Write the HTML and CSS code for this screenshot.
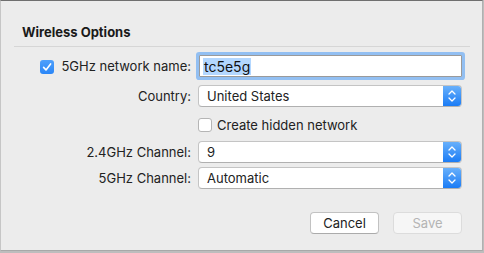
FILE: index.html
```html
<!DOCTYPE html>
<html>
<head>
<meta charset="utf-8">
<link rel="stylesheet" href="styles.css">
</head>
<body>
<div class="window">
  <div class="heading">Wireless Options</div>
  <div class="sep"></div>
  <div class="form">
    <div class="label label-check">
      <span class="cb checked"><svg viewBox="0 0 14 14" width="14" height="14"><path d="M3.6 7.4 L6 9.9 L10.6 3.9" fill="none" stroke="#fff" stroke-width="1.6" stroke-linecap="round" stroke-linejoin="round"/></svg></span>
      <span>5GHz network name:</span>
    </div>
    <div class="ctrl"><div class="field"><span class="sel">tc5e5g</span></div></div>

    <div class="label">Country:</div>
    <div class="ctrl"><div class="select"><span class="val">United States</span><span class="arrow"><svg viewBox="0 0 18 20" width="18" height="20"><path d="M6 8 L9 5 L12 8 M6 12 L9 15 L12 12" fill="none" stroke="#fff" stroke-width="1.3" stroke-linecap="round" stroke-linejoin="round"/></svg></span></div></div>

    <div class="label"></div>
    <div class="ctrl check-row"><span class="cb"></span><span>Create hidden network</span></div>

    <div class="label">2.4GHz Channel:</div>
    <div class="ctrl"><div class="select"><span class="val">9</span><span class="arrow"><svg viewBox="0 0 18 20" width="18" height="20"><path d="M6 8 L9 5 L12 8 M6 12 L9 15 L12 12" fill="none" stroke="#fff" stroke-width="1.3" stroke-linecap="round" stroke-linejoin="round"/></svg></span></div></div>

    <div class="label">5GHz Channel:</div>
    <div class="ctrl"><div class="select"><span class="val">Automatic</span><span class="arrow"><svg viewBox="0 0 18 20" width="18" height="20"><path d="M6 8 L9 5 L12 8 M6 12 L9 15 L12 12" fill="none" stroke="#fff" stroke-width="1.3" stroke-linecap="round" stroke-linejoin="round"/></svg></span></div></div>
  </div>
  <div class="buttons">
    <button class="btn">Cancel</button>
    <button class="btn disabled">Save</button>
  </div>
</div>
</body>
</html>
```
FILE: styles.css
```css
html, body {
  margin: 0;
  padding: 0;
  background: #bdbdbd;
}
body {
  width: 484px;
  height: 253px;
  font-family: "Inter", "Liberation Sans", Arial, sans-serif;
  font-size: 13px;
  color: #222;
}
.window {
  box-sizing: border-box;
  width: 483px;
  height: 251px;
  background: #ececec;
  border-top: 1px solid #6f6f6f;
  border-left: 1px solid #c6c6c6;
  border-right: 1px solid #b0b0b0;
  border-bottom: 1px solid #a8a8a8;
  padding: 0 12px 0 13px;
}
.heading {
  font-weight: bold;
  font-size: 13px;
  color: #1a1a1a;
  padding: 24px 0 0 8px;
  height: 21px;
  line-height: 15px;
}
.sep {
  height: 1px;
  background: #d6d6d6;
  margin-bottom: 7px;
}
.form {
  display: grid;
  grid-template-columns: 177px 264px;
  column-gap: 7px;
  grid-template-rows: 24px 7px 22px 11px 14px 9px 22px 4px 22px;
  grid-template-areas:
    "l1 c1" "w w" "l2 c2" "x x" "l3 c3" "y y" "l4 c4" "z z" "l5 c5";
}
.form > :nth-child(1) { grid-area: l1; }
.form > :nth-child(2) { grid-area: c1; }
.form > :nth-child(3) { grid-area: l2; }
.form > :nth-child(4) { grid-area: c2; }
.form > :nth-child(5) { grid-area: l3; }
.form > :nth-child(6) { grid-area: c3; }
.form > :nth-child(7) { grid-area: l4; }
.form > :nth-child(8) { grid-area: c4; }
.form > :nth-child(9) { grid-area: l5; }
.form > :nth-child(10) { grid-area: c5; }
.label {
  display: flex;
  align-items: center;
  justify-content: flex-end;
  white-space: nowrap;
}
.label-check {
  justify-content: space-between;
  padding-left: 26px;
}
.label-check .cb { margin-top: 1px; }
.ctrl {
  display: flex;
  align-items: center;
}
.cb {
  box-sizing: border-box;
  width: 14px;
  height: 14px;
  border-radius: 3px;
  background: #fff;
  border: 1px solid #b5b5b5;
  display: inline-block;
  flex: none;
}
.cb.checked {
  border: none;
  background: linear-gradient(#4fa0fb, #2a86f7);
}
.cb svg { display: block; }
.check-row span + span { margin-left: 5px; }
.field {
  box-sizing: border-box;
  width: 263px;
  height: 22px;
  margin-left: 1px;
  background: #fff;
  border: 1px solid #9a9a9a;
  box-shadow: 0 0 0 3px #92bff2;
  border-radius: 1px;
  display: flex;
  align-items: center;
  padding-left: 3px;
}
.sel {
  background: #b3d7ff;
  color: #111;
  font-size: 14px;
  line-height: 17px;
  padding: 0 1px;
}
.select {
  box-sizing: border-box;
  width: 264px;
  height: 22px;
  background: #fff;
  border: 1px solid #c4c4c4;
  border-bottom-color: #b0b0b0;
  border-radius: 4px;
  display: flex;
  align-items: stretch;
  overflow: hidden;
}
.val {
  flex: 1;
  display: flex;
  align-items: center;
  padding-left: 8px;
}
.arrow {
  width: 18px;
  background: linear-gradient(#68b0fb, #1b7cf5);
  display: flex;
  align-items: center;
  justify-content: center;
}
.arrow svg { display: block; }
.buttons {
  display: flex;
  justify-content: flex-end;
  gap: 14px;
  margin-top: 23px;
  padding-right: 8px;
}
.btn {
  box-sizing: border-box;
  height: 22px;
  font-family: inherit;
  font-size: 13px;
  color: #222;
  background: #fff;
  border: 1px solid #c2c2c2;
  border-bottom-color: #ababab;
  border-radius: 4px;
  padding: 0;
  width: 69px;
}
.btn.disabled {
  background: #f6f6f6;
  color: #b4b4b4;
  border-color: #dcdcdc;
}
```
